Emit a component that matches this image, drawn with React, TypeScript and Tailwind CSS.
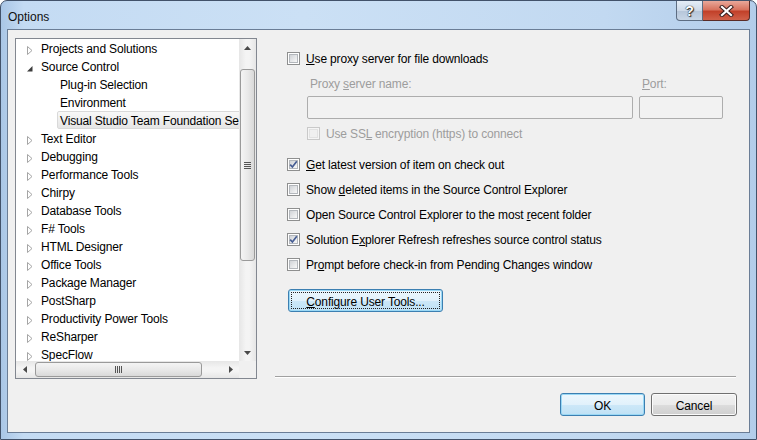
type Node = { label: string; level: number; state?: "open" | "closed"; selected?: boolean };

const tree: Node[] = [
  { label: "Projects and Solutions", level: 0, state: "closed" },
  { label: "Source Control", level: 0, state: "open" },
  { label: "Plug-in Selection", level: 1 },
  { label: "Environment", level: 1 },
  { label: "Visual Studio Team Foundation Server", level: 1, selected: true },
  ...[
    "Text Editor",
    "Debugging",
    "Performance Tools",
    "Chirpy",
    "Database Tools",
    "F# Tools",
    "HTML Designer",
    "Office Tools",
    "Package Manager",
    "PostSharp",
    "Productivity Power Tools",
    "ReSharper",
    "SpecFlow",
  ].map((label) => ({ label, level: 0, state: "closed" as const })),
];

function Expander({ state }: { state?: "open" | "closed" }) {
  if (state === "open")
    return (
      <svg width="6" height="6" viewBox="0 0 6 6" className="mt-[6px]">
        <path d="M5.5 0 L5.5 5.5 L0 5.5 Z" fill="#3d3d3d" />
      </svg>
    );
  if (state === "closed")
    return (
      <svg width="6" height="9" viewBox="0 0 6 9" className="mt-[5px]">
        <path d="M0.5 0.5 L5 4.5 L0.5 8.5 Z" fill="none" stroke="#a5a5a5" />
      </svg>
    );
  return null;
}

function TreeRow({ node }: { node: Node }) {
  return (
    <div className="h-[18px] flex items-center whitespace-nowrap">
      <div className="w-[23px] shrink-0 pl-[11px] flex items-center">{node.level === 0 && <Expander state={node.state} />}</div>
      <div className={node.level === 1 ? "pl-[18px]" : "-ml-px"}>
        <div
          className={`h-[18px] flex items-center pl-[2px] pr-[4px] pt-[2px] rounded-[2px] border ${
            node.selected ? "border-[#d9d9d9] bg-linear-to-b from-[#f8f8f8] to-[#e5e5e5]" : "border-transparent"
          }`}
        >
          {node.label}
        </div>
      </div>
    </div>
  );
}

function Arrow({ dir }: { dir: "up" | "down" | "left" | "right" }) {
  const d = {
    up: "M0 4 L3.5 0 L7 4 Z",
    down: "M0 0 L7 0 L3.5 4 Z",
    left: "M4 0 L4 7 L0 3.5 Z",
    right: "M0 0 L4 3.5 L0 7 Z",
  }[dir];
  const vertical = dir === "up" || dir === "down";
  return (
    <svg width={vertical ? 7 : 4} height={vertical ? 4 : 7} viewBox={vertical ? "0 0 7 4" : "0 0 4 7"}>
      <path d={d} fill="#4a4a4a" />
    </svg>
  );
}

function CheckBox({ checked, disabled }: { checked?: boolean; disabled?: boolean }) {
  return (
    <span
      className={`relative w-[13px] h-[13px] shrink-0 border flex items-center justify-center ${
        disabled ? "border-[#c9c9c9] bg-[#f5f5f5]" : "border-[#8e8f8f] bg-white"
      }`}
    >
      <span
        className={`w-[9px] h-[9px] border ${
          disabled
            ? "border-[#e2e2e2] bg-[#f0f0f0]"
            : "border-[#b3b7bc] bg-linear-to-br from-[#d0d3d7] to-[#f8f8f8]"
        }`}
      />
      {checked && (
        <svg width="11" height="11" viewBox="0 0 11 11" className="absolute left-0 top-0">
          <path d="M2.2 5.6 L4.4 8 L8.8 2.2" fill="none" stroke="#465d93" strokeWidth="1.7" />
        </svg>
      )}
    </span>
  );
}

function CheckRow({ checked, children }: { checked?: boolean; children: React.ReactNode }) {
  return (
    <div className="h-[18px] flex items-center gap-[6px] pl-[30px]">
      <CheckBox checked={checked} />
      <span className="pt-[2px]">{children}</span>
    </div>
  );
}

function Button({ children, variant, focus }: { children: React.ReactNode; variant: "default" | "normal"; focus?: boolean }) {
  return (
    <button
      className={`relative w-full h-[23px] pt-[2px] rounded-[3px] border flex items-center justify-center ${
        variant === "default"
          ? "border-[#3c7fb1] bg-[linear-gradient(#edf7fd_0%,#e1f1fb_50%,#cde8f8_51%,#bfe1f5_100%)] shadow-[inset_0_0_0_1px_#9ad8f5]"
          : "border-[#707070] bg-[linear-gradient(#f2f2f2_0%,#ebebeb_50%,#dddddd_51%,#cfcfcf_100%)] shadow-[inset_0_0_0_1px_#fbfbfb]"
      }`}
    >
      {focus && <span className="absolute inset-[2px] border border-dotted border-[#222]" />}
      {children}
    </button>
  );
}

export default function App() {
  return (
    <div className="w-[757px] h-[440px] border border-[#42526a] rounded-t-[7px] px-[6px] pb-[6px] flex flex-col font-['Liberation_Sans',Arial,sans-serif] text-[12px] tracking-[-0.15px] text-black bg-[linear-gradient(90deg,#a9c6e6_0%,#c4dbf3_3%,#cbe0f5_40%,#c2d9f1_80%,#b3cdea_100%)] overflow-hidden">
      {/* title bar */}
      <div className="h-[28px] flex items-start shrink-0">
        <div className="pl-[1px] pt-[7px] text-[#101010] tracking-normal">Options</div>
        <div className="ml-auto flex">
          <div className="w-[27px] h-[20px] rounded-bl-[4px] border border-t-0 border-[#5d6d82] bg-[linear-gradient(#e4edf7_0%,#cdd9e8_50%,#b5c5d9_51%,#c8d6e6_100%)] flex items-center justify-center">
            <span className="text-white font-bold text-[14px] leading-none [text-shadow:0_0_1px_#222,0_0_1px_#222,1px_1px_1px_#333]">?</span>
          </div>
          <div className="w-[47px] h-[20px] rounded-br-[4px] border border-l-0 border-t-0 border-[#5a2b26] bg-[linear-gradient(#e9a89a_0%,#d8735f_45%,#c2412a_55%,#d0614a_100%)] flex items-center justify-center">
            <svg width="15" height="12" viewBox="0 0 15 12">
              <path d="M3 2 L12 10 M12 2 L3 10" stroke="#3a2020" strokeWidth="4.2" strokeLinecap="square" />
              <path d="M3 2 L12 10 M12 2 L3 10" stroke="#ffffff" strokeWidth="2.2" strokeLinecap="square" />
            </svg>
          </div>
        </div>
      </div>

      {/* client area */}
      <div className="flex-1 border border-[#6a7d96] bg-[#f0f0f0] flex flex-col">
        <div className="h-[349px] flex shrink-0">
          {/* tree */}
          <div className="ml-[7px] mt-[8px] w-[242px] h-[341px] border border-[#828790] bg-white flex flex-col">
            <div className="flex h-[322px]">
              <div className="w-[223px] overflow-hidden">
                {tree.map((n) => (
                  <TreeRow key={n.label} node={n} />
                ))}
              </div>
              <div className="w-[17px] flex flex-col bg-[linear-gradient(90deg,#e6e6e6,#f4f4f4_40%,#f4f4f4_60%,#e6e6e6)]">
                <div className="h-[17px] flex items-center justify-center">
                  <Arrow dir="up" />
                </div>
                <div className="h-[13px]" />
                <div className="mx-[1px] h-[192px] rounded-[3px] border border-[#9a9a9a] bg-[linear-gradient(90deg,#f4f4f4,#e9e9e9_50%,#d9d9d9)] flex flex-col items-center justify-center gap-[1px]">
                  <span className="w-[7px] h-px bg-[#555]" />
                  <span className="w-[7px] h-px bg-[#555]" />
                  <span className="w-[7px] h-px bg-[#555]" />
                  <span className="w-[7px] h-px bg-[#555]" />
                </div>
                <div className="flex-1" />
                <div className="h-[17px] flex items-center justify-center">
                  <Arrow dir="down" />
                </div>
              </div>
            </div>
            <div className="h-[17px] flex">
              <div className="w-[223px] flex bg-[linear-gradient(#e6e6e6,#f4f4f4_40%,#f4f4f4_60%,#e6e6e6)]">
                <div className="w-[17px] flex items-center justify-center">
                  <Arrow dir="left" />
                </div>
                <div className="ml-[2px] my-[1px] w-[167px] rounded-[3px] border border-[#9a9a9a] bg-[linear-gradient(#f4f4f4,#e9e9e9_50%,#d9d9d9)] flex items-center justify-center gap-[1px]">
                  <span className="w-px h-[7px] bg-[#555]" />
                  <span className="w-px h-[7px] bg-[#555]" />
                  <span className="w-px h-[7px] bg-[#555]" />
                  <span className="w-px h-[7px] bg-[#555]" />
                </div>
                <div className="flex-1" />
                <div className="w-[17px] flex items-center justify-center">
                  <Arrow dir="right" />
                </div>
              </div>
              <div className="w-[17px] bg-[#f0f0f0]" />
            </div>
          </div>

          {/* options */}
          <div className="flex-1 flex flex-col">
            <div className="mt-[19px]">
              <CheckRow>
                <u>U</u>se proxy server for file downloads
              </CheckRow>
            </div>
            <div className="mt-[7px] pl-[50px] grid grid-cols-[326px_84px] gap-x-[6px] text-[#9d9d9d]">
              <div className="h-[18px] flex items-center pl-[3px] pt-[2px]">
                Proxy&nbsp;<u>s</u>erver name:
              </div>
              <div className="h-[18px] flex items-center pl-[3px] pt-[2px]">
                <u>P</u>ort:
              </div>
              <div className="mt-[4px] h-[23px] rounded-[2px] border border-[#adadad] bg-[#f2f2f2]" />
              <div className="mt-[4px] h-[23px] rounded-[2px] border border-[#adadad] bg-[#f2f2f2]" />
            </div>
            <div className="mt-[5px] h-[18px] pl-[50px] flex items-center gap-[6px] text-[#9d9d9d]">
              <CheckBox disabled />
              <span className="pt-[2px]">
                Use SS<u>L</u> encryption (https) to connect
              </span>
            </div>
            <div className="mt-[13px] flex flex-col gap-[7px]">
              <CheckRow checked>
                <u>G</u>et latest version of item on check out
              </CheckRow>
              <CheckRow>
                Show <u>d</u>eleted items in the Source Control Explorer
              </CheckRow>
              <CheckRow>
                Open Source Control Explorer to the most <u>r</u>ecent folder
              </CheckRow>
              <CheckRow checked>
                Solution E<u>x</u>plorer Refresh refreshes source control status
              </CheckRow>
              <CheckRow>
                Pr<u>o</u>mpt before check-in from Pending Changes window
              </CheckRow>
            </div>
            <div className="mt-[16px] pl-[31px]">
              <div className="w-[155px]">
                <Button variant="default" focus>
                  <span>
                    <u>C</u>onfigure User Tools...
                  </span>
                </Button>
              </div>
            </div>
            <div className="mt-auto mb-[1px] ml-[18px] mr-[13px] h-px bg-[#a0a0a0] border-b border-white box-content" />
          </div>
        </div>

        {/* dialog buttons */}
        <div className="mt-[14px] flex justify-end gap-[6px] pr-[12px]">
          <div className="w-[85px]">
            <Button variant="default">
              <span>OK</span>
            </Button>
          </div>
          <div className="w-[86px]">
            <Button variant="normal">
              <span>Cancel</span>
            </Button>
          </div>
        </div>
      </div>
    </div>
  );
}
